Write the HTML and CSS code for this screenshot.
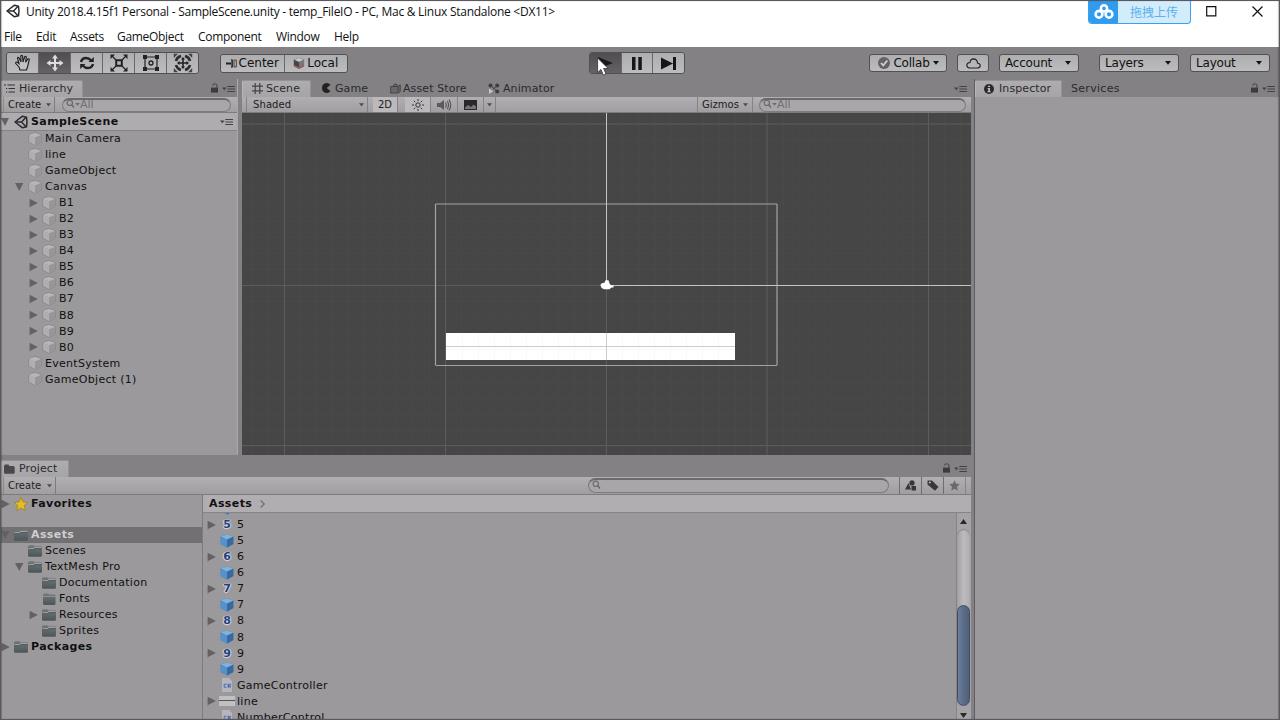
FILE: index.html
```
<!DOCTYPE html>
<html lang="en">
<head>
    <meta charset="UTF-8">
    <meta name="viewport" content="width=device-width, initial-scale=1.0">
    <title>Unity 2018.4.15f1 Personal - SampleScene.unity</title>
    <link rel="stylesheet" href="styles.css">
</head>
<body>
    <!-- shared icons -->
    <svg class="sprite">
        <defs>
            <linearGradient id="folderFill" x1="0" y1="0" x2="0" y2="1">
                <stop offset="0" stop-color="#71787a"/><stop offset="1" stop-color="#4c5558"/>
            </linearGradient>
        </defs>
        <symbol id="unity" viewBox="0 0 14 14">
            <path d="M1 7L8.5 1.2L12.5 2.2L13 7L12.5 11.8L8.5 12.8Z" fill="none" stroke="#2c2b2d" stroke-width="1.5" stroke-linejoin="round"/>
            <path d="M1 7H7.5L12 2.2M7.5 7L12 11.8" fill="none" stroke="#2c2b2d" stroke-width="1.4"/>
        </symbol>
        <symbol id="cube" viewBox="0 0 14 14">
            <path d="M7 .5L13.3 2.6V10L7 13.5L.7 10V2.6Z" fill="#a7a6a8" stroke="#858386" stroke-width=".7"/>
            <path d="M1.2 3L7 5.3V13L1.2 9.8Z" fill="#afaeb0"/>
            <path d="M7 5.3L12.8 3V9.8L7 13Z" fill="#989699"/>
            <path d="M7 .9L12.8 2.8L7 5.3L1.2 2.8Z" fill="#b7b6b8"/>
        </symbol>
        <symbol id="prefab" viewBox="0 0 14 14">
            <path d="M7 .5L13.3 2.6V10L7 13.5L.7 10V2.6Z" fill="#3f78b4"/>
            <path d="M.7 2.9L7 5.6V13.5L.7 10Z" fill="#5591cb"/>
            <path d="M7 5.6L13.3 2.9V10L7 13.5Z" fill="#38699f"/>
            <path d="M7 .5L13.3 2.6L7 5.6L.7 2.6Z" fill="#7fb2dc"/>
        </symbol>
        <symbol id="folder" viewBox="0 0 14 14">
            <path d="M0 12V2.8L1 1.2H5.5L6.5 2.2H13L14 3.2V12L13 12.8H1Z" fill="url(#folderFill)"/>
            <path d="M.6 4.7H5L7 3.4H13.4" stroke="#a3acae" stroke-width="1" fill="none"/>
            <path d="M.6 5.8H5.4L7.2 4.6H13.4" stroke="#485154" stroke-width=".7" fill="none"/>
        </symbol>
        <symbol id="folderEmpty" viewBox="0 0 14 14">
            <path d="M1 3.5L1.8 1.5H6L7 2.5H13L13.5 4V12L12.5 13H2L1 12Z" fill="url(#folderFill)"/>
            <path d="M1 4.4H13.4" stroke="#8e989b" stroke-width="1"/>
        </symbol>
        <symbol id="star" viewBox="0 0 14 14">
            <path d="M7 .4L9 4.9L13.8 5.4L10.2 8.6L11.3 13.6L7 11L2.7 13.6L3.8 8.6L.2 5.4L5 4.9Z" fill="#e5bd22" stroke="#a88317" stroke-width=".8"/>
        </symbol>
        <symbol id="script" viewBox="0 0 14 14">
            <path d="M2 0H9L12 3V14H2Z" fill="#b5b5bd"/>
            <path d="M6.6 6.2H4.2V9.2H6.6M7.4 6.7H11M7.4 8.7H11M8.4 5.8V9.6M10 5.8V9.6" fill="none" stroke="#4e6caf" stroke-width="1"/>
        </symbol>
        <symbol id="lock" viewBox="0 0 9 10">
            <path d="M1 4.6H8V9.6H1Z" fill="#3d3b3f"/>
            <path d="M2.8 2.7V2Q3 .8 4.7.8T7 2.5V5" fill="none" stroke="#4b494d" stroke-width="1.1"/>
        </symbol>
        <symbol id="paneMenu" viewBox="0 0 13 8">
            <path d="M0 2.5H4.6L2.3 5.3Z" fill="#444246"/>
            <path d="M5.3 1.5H13M5.3 4H13M5.3 6.5H13" stroke="#444246" stroke-width="1.1"/>
        </symbol>
        <symbol id="down" viewBox="0 0 6 4"><path d="M0 0H6L3 3.8Z" fill="currentColor"/></symbol>
        <symbol id="glass" viewBox="0 0 13 10">
            <circle cx="3.8" cy="3.8" r="2.7" fill="none" stroke="#6b696d" stroke-width="1.2"/>
            <path d="M5.8 5.8L8 8.4" stroke="#6b696d" stroke-width="1.5"/>
        </symbol>
    </svg>

    <div class="window">
        <header class="titlebar">
            <svg class="title-icon"><use href="#unity"/></svg>
            <span class="title">Unity 2018.4.15f1 Personal - SampleScene.unity - temp_FileIO - PC, Mac &amp; Linux Standalone &lt;DX11&gt;</span>
            <div class="upload">
                <span class="upload-logo">
                    <svg width="20" height="16" viewBox="0 0 20 16" fill="none" stroke="#fff" stroke-width="2.6">
                        <circle cx="10" cy="4.4" r="3.1"/><circle cx="5" cy="10.3" r="3.4"/><circle cx="15" cy="10.3" r="3.4"/>
                    </svg>
                </span>
                <span class="upload-text">拖拽上传</span>
            </div>
            <svg class="win-max" width="11" height="11" viewBox="0 0 11 11"><path d="M.7.7H9.8V9.8H.7Z" fill="none" stroke="#111" stroke-width="1.2"/></svg>
            <svg class="win-close" width="11" height="11" viewBox="0 0 11 11"><path d="M.5.5L10.5 10.5M10.5.5L.5 10.5" stroke="#111" stroke-width="1.2"/></svg>
        </header>

        <nav class="menubar">
            <span class="m-file">File</span><span class="m-edit">Edit</span><span class="m-assets">Assets</span><span class="m-object">GameObject</span><span class="m-component">Component</span><span class="m-window">Window</span><span>Help</span>
        </nav>

        <div class="toolbar">
            <div class="group tools">
                <button><svg width="18" height="18" viewBox="0 0 18 18"><path d="M6 16L5 13L1.8 9.5Q1.2 8 3 8L5 9.5L3.5 4.2Q3.8 2.8 5 3.8L7 8L6.8 2Q7.6.8 8.6 2L9 8L10.8 2.5Q12 1.8 12.3 3L11.6 8.3L14 4.8Q15.4 4.6 15.2 6L13.5 13L12.5 16Z" fill="#c1c0c2" stroke="#1c1b1d" stroke-width="1.1"/></svg></button>
                <button class="on"><svg width="18" height="18" viewBox="0 0 18 18"><path d="M9 .5L12 4.5H10V8H13.5V6L17.5 9L13.5 12V10H10V13.5H12L9 17.5L6 13.5H8V10H4.5V12L.5 9L4.5 6V8H8V4.5H6Z" fill="#dddcde"/></svg></button>
                <button><svg width="18" height="18" viewBox="0 0 18 18"><path d="M3 8Q4 4 8 4Q11 4 13 6.3M15 10Q14 14 10 14Q7 14 5 11.7" fill="none" stroke="#222" stroke-width="2.4"/><path d="M15.8 3V8H10.5ZM2.2 15V10H7.5Z" fill="#222"/></svg></button>
                <button><svg width="18" height="18" viewBox="0 0 18 18"><path d="M6.2 6.2H11.8V11.8H6.2Z" fill="none" stroke="#222" stroke-width="2"/><path d="M2 2L6 6M16 2L12 6M2 16L6 12M16 16L12 12" stroke="#222" stroke-width="1.2"/><path d="M.5.5H5L.5 5ZM17.5.5V5L13 .5ZM.5 17.5V13L5 17.5ZM17.5 17.5H13L17.5 13Z" fill="#222"/></svg></button>
                <button><svg width="18" height="18" viewBox="0 0 18 18"><path d="M3 3H15V15H3Z" fill="none" stroke="#222" stroke-width="1.2"/><path d="M1 1H5V5H1ZM13 1H17V5H13ZM1 13H5V17H1ZM13 13H17V17H13Z" fill="#222"/><circle cx="9" cy="9" r="2" fill="none" stroke="#222" stroke-width="1.3"/></svg></button>
                <button><svg width="20" height="20" viewBox="0 0 20 20"><path d="M3 8Q4 4 8 3M12 3Q16 4 17 8M17 12Q16 16 12 17M8 17Q4 16 3 12" fill="none" stroke="#2c2b2d" stroke-width="2.6"/><path d="M10 4L12 6.6H10.8V9.2H13.4V8L16 10L13.4 12V10.8H10.8V13.4H12L10 16L8 13.4H9.2V10.8H6.6V12L4 10L6.6 8V9.2H9.2V6.6H8Z" fill="#222"/><path d="M.8.8H5L.8 5ZM19.2.8V5L15 .8ZM.8 19.2V15L5 19.2ZM19.2 19.2H15L19.2 15Z" fill="#444"/></svg></button>
            </div>
            <div class="group pivot">
                <button><svg width="11" height="9" viewBox="0 0 11 9"><path d="M0 3.5H5V5.5H0Z" fill="#222"/><path d="M5 .8H6.5V8.2H5" fill="#555" stroke="#333"/><path d="M8 1H10.3V8H8Z" fill="none" stroke="#444"/></svg><span>Center</span></button>
                <button><svg width="12" height="12" viewBox="0 0 14 14"><path d="M7 .5L13 3V10L7 13.5L1 10V3Z" fill="#777"/><path d="M1 3.5L7 6V13L1 10Z" fill="#444"/><path d="M1 9L7 12L13 9V11L7 14L1 11Z" fill="#94595b"/><path d="M7 1L12 3.2L7 5.5L2 3.2Z" fill="#c7c7c7"/></svg><span>Local</span></button>
            </div>
            <div class="group play">
                <button class="on"><svg width="16" height="14" viewBox="0 0 16 14"><path d="M1 1L16 7L1 13Z" fill="#19181b"/></svg></button>
                <button><svg width="10" height="13" viewBox="0 0 10 13"><path d="M0 0H3.5V13H0ZM6.3 0H9.8V13H6.3Z" fill="#161517"/></svg></button>
                <button><svg width="16" height="13" viewBox="0 0 16 13"><path d="M0 .5L12 6.5L0 12.5ZM12 0H15V13H12Z" fill="#161517"/></svg></button>
            </div>
            <button class="drop collab"><svg class="check" width="12" height="12" viewBox="0 0 12 12"><circle cx="6" cy="6" r="6" fill="#646266"/><path d="M3 6L5.3 8.4L9.3 3.5" fill="none" stroke="#d0cfd1" stroke-width="1.8"/></svg><span>Collab</span><svg class="caret"><use href="#down"/></svg></button>
            <button class="drop cloud"><svg width="15" height="11" viewBox="0 0 15 11"><path d="M3.5 10H11.5Q14.3 9.8 14.2 7.5Q14 5.3 11.7 5.3Q11 .9 7.5.9Q4.4 1 4 4.5Q.8 4.7.8 7.3Q.9 9.8 3.5 10Z" fill="none" stroke="#222" stroke-width="1.1"/></svg></button>
            <button class="drop account"><span>Account</span><svg class="caret"><use href="#down"/></svg></button>
            <button class="drop layers"><span>Layers</span><svg class="caret"><use href="#down"/></svg></button>
            <button class="drop layout"><span>Layout</span><svg class="caret"><use href="#down"/></svg></button>
        </div>

        <main class="workspace">
            <div class="left-area">
                <div class="upper">
                    <section class="hierarchy">
                        <div class="tabs">
                            <div class="tab active t-hierarchy"><svg width="11" height="9" viewBox="0 0 11 9"><path d="M0 1H2M3.5 1H11M2 4.5H3.2M4.5 4.5H11M2 8H3.2M4.5 8H11" stroke="#333" stroke-width="1.2"/></svg><span>Hierarchy</span></div>
                            <svg class="lock"><use href="#lock"/></svg><svg class="pane-menu"><use href="#paneMenu"/></svg>
                        </div>
                        <div class="bar">
                            <span class="create">Create<svg class="caret"><use href="#down"/></svg></span>
                            <div class="search"><svg class="glass"><use href="#glass"/></svg><svg class="tiny"><use href="#down"/></svg><span>All</span></div>
                        </div>
                        <div class="row scene-row">
                            <svg class="arrow" viewBox="0 0 10 10"><path d="M1 1H9L5 9Z"/></svg><svg class="icon"><use href="#unity"/></svg><span>SampleScene</span><svg class="pane-menu"><use href="#paneMenu"/></svg>
                        </div>
                        <div id="hierarchyRows" class="hierarchy-rows"></div>
                    </section>

                    <section class="scene">
                        <div class="tabs">
                            <div class="tab active t-scene"><svg width="11" height="11" viewBox="0 0 11 11"><path d="M3.2 0V11M7.8 0V11M0 3.2H11M0 7.8H11" stroke="#444" stroke-width="1.2"/></svg><span>Scene</span></div>
                            <div class="tab t-game"><svg width="9" height="10" viewBox="0 0 9 10"><path d="M8.5 1.8Q7 0 4.8 0Q0 .5 0 5T4.8 10Q7 10 8.5 8.2L4.8 5Z" fill="#222"/></svg><span>Game</span></div>
                            <div class="tab t-store"><svg width="11" height="11" viewBox="0 0 11 11"><path d="M.7 3.5H8V10H.7ZM8 3.5L10.2 1.8V8.5L8 10M3 3.2Q4 0 7 1.4L7 3" fill="#6a686c" stroke="#444" stroke-width="1"/></svg><span>Asset Store</span></div>
                            <div class="tab t-animator"><svg width="12" height="11" viewBox="0 0 12 11"><path d="M2.5 2.5L9.5 8.5M9.5 2.5L5 6" stroke="#444"/><circle cx="2.5" cy="2.5" r="2" fill="#3f3d41"/><circle cx="9.2" cy="2.5" r="2" fill="#3f3d41"/><circle cx="9.2" cy="8.5" r="2" fill="#3f3d41"/><path d="M1 5.5L5 8.2L1 11Z" fill="#c9c8ca"/></svg><span>Animator</span></div>
                            <svg class="pane-menu"><use href="#paneMenu"/></svg>
                        </div>
                        <div class="bar">
                            <span class="cell shaded">Shaded<svg class="caret"><use href="#down"/></svg></span>
                            <span class="cell lit two-d">2D</span>
                            <span class="cell lit sun"><svg width="12" height="12" viewBox="0 0 12 12"><circle cx="6" cy="6" r="2.2" fill="none" stroke="#333"/><path d="M6 0V2M6 10V12M0 6H2M10 6H12M1.8 1.8L3.2 3.2M8.8 8.8L10.2 10.2M10.2 1.8L8.8 3.2M3.2 8.8L1.8 10.2" stroke="#333"/></svg></span>
                            <span class="cell sound"><svg width="15" height="12" viewBox="0 0 15 12"><path d="M0 4H3L7 1V11L3 8H0Z" fill="#5c5a5e"/><path d="M8.5 3.5Q10 6 8.5 8.5M10.3 2Q12.8 6 10.3 10M12 .6Q15.5 6 12 11.4" fill="none" stroke="#555357" stroke-width="1.1"/></svg></span>
                            <span class="cell picture"><svg width="13" height="10" viewBox="0 0 13 10"><path d="M0 0H13V10H0Z" fill="#29282b"/><path d="M1 9V7.5L4 5L7 7L9.5 4.5L12 6.5V9Z" fill="#77757a"/></svg></span>
                            <span class="cell pick"><svg class="caret"><use href="#down"/></svg></span>
                            <span class="cell gizmos">Gizmos<svg class="caret"><use href="#down"/></svg></span>
                            <div class="search"><svg class="glass"><use href="#glass"/></svg><svg class="tiny"><use href="#down"/></svg><span>All</span></div>
                        </div>
                        <svg class="viewport" width="729" height="342" viewBox="242 113 729 342">
                            <defs>
                                <pattern id="minorGrid" x="284" y="124" width="16.1" height="16.1" patternUnits="userSpaceOnUse"><path d="M.5 0V16.1M0 .5H16.1" stroke="#494949" fill="none"/></pattern>
                            </defs>
                            <rect x="242" y="113" width="729" height="342" fill="#464646"/>
                            <rect x="242" y="113" width="729" height="342" fill="url(#minorGrid)"/>
                            <path d="M284.5 113V455M445.5 113V455M606.5 285V455M767 113V455M928.5 113V455M242 124H971M242 285.5H606M242 445.5H971" stroke="#5c5c5c"/>
                            <rect x="446" y="333" width="289" height="27" fill="#fff"/>
                            <path d="M462.5 333V360M478.5 333V360M494.5 333V360M510.5 333V360M526.5 333V360M542.5 333V360M558.5 333V360M574.5 333V360M590.5 333V360M622.5 333V360M638.5 333V360M654.5 333V360M670.5 333V360M686.5 333V360M702.5 333V360M718.5 333V360M446 349.5H735" stroke="#f8f8fa"/>
                            <path d="M446 346.5H735M606.5 333V360" stroke="#cccccf"/>
                            <path d="M435.5 204H777M435.5 365.5H777M435.5 204V365M777 204V365" stroke="#a3a3a3" stroke-width="1.2"/>
                            <path d="M606.5 113V285M607 285.5H971" stroke="#c4c4c4"/>
                            <path d="M600.5 285.5Q600.5 282.8 604.5 282.8L605.5 280.3H608.5L609.5 283.5L611 285.3L613.5 285.5V287.5H611.5L609.5 289.3H604Q601 288.5 600.5 285.5Z" fill="#fff"/>
                        </svg>
                    </section>
                </div>

                <section class="project">
                    <div class="tabs">
                        <div class="tab active t-project"><svg width="11" height="10" viewBox="0 0 11 10"><path d="M0 9V2L1 .5H4.5L5.5 2H9.5L10.7 3V9L9.8 9.7H.8Z" fill="#4a484c"/></svg><span>Project</span></div>
                        <svg class="lock"><use href="#lock"/></svg><svg class="pane-menu"><use href="#paneMenu"/></svg>
                    </div>
                    <div class="bar">
                        <span class="create">Create<svg class="caret"><use href="#down"/></svg></span>
                        <div class="search"><svg class="glass"><use href="#glass"/></svg></div>
                        <span class="cell filter"><svg width="12" height="11" viewBox="0 0 12 11"><path d="M0 9.5L3.5 3L6 9.5ZM6.5 6H11V10.5H6.5Z" fill="#38363a"/><circle cx="7" cy="2.9" r="2.6" fill="#38363a"/></svg></span>
                        <span class="cell filter"><svg width="12" height="11" viewBox="0 0 12 11"><path d="M.5.5H5L11.5 7L8 10.7L.5 4.5Z" fill="#38363a"/><circle cx="2.8" cy="2.6" r="1" fill="#bbb"/></svg></span>
                        <span class="cell filter"><svg width="11" height="11" viewBox="0 0 14 14"><path d="M7 .3L9 4.9L13.8 5.2L10.2 8.6L11.2 13.6L7 11L2.8 13.6L3.8 8.6L.2 5.2L5 4.9Z" fill="#6b696d"/></svg></span>
                        <span class="cell"></span>
                    </div>
                    <div class="browser">
                        <div id="folderRows" class="folders"></div>
                        <div class="files">
                            <div class="crumb">Assets<svg width="5" height="8" viewBox="0 0 5 8"><path d="M.6.5L4.2 4L.6 7.5" fill="none" stroke="#737175" stroke-width="1.3"/></svg></div>
                            <div class="file-body">
                                <div id="fileRows" class="file-rows"></div>
                                <div class="scrollbar">
                                    <svg width="7" height="5" viewBox="0 0 7 5"><path d="M0 5L3.5 0L7 5Z" fill="#29282b"/></svg>
                                    <div class="track"><div class="thumb"></div></div>
                                    <svg width="7" height="5" viewBox="0 0 7 5"><path d="M0 0L3.5 5L7 0Z" fill="#29282b"/></svg>
                                </div>
                            </div>
                        </div>
                    </div>
                </section>
            </div>

            <section class="inspector">
                <div class="tabs">
                    <div class="tab active t-inspector"><svg width="10" height="10" viewBox="0 0 10 10"><circle cx="5" cy="5" r="5" fill="#2a292c"/><path d="M4 1.7H6V3.1H4ZM3.6 4H6V7.2H6.8V8.2H3.4V7.2H4.2V5H3.6Z" fill="#bbb"/></svg><span>Inspector</span></div>
                    <div class="tab t-services"><span>Services</span></div>
                    <svg class="lock"><use href="#lock"/></svg><svg class="pane-menu"><use href="#paneMenu"/></svg>
                </div>
                <div class="inspector-body"></div>
            </section>
        </main>

        <svg class="cursor" width="12" height="20" viewBox="0 0 12 20"><path d="M.6 1V15.5L4 12.4L6.3 18.2L9 17L6.6 11.5H11.2Z" fill="#fff" stroke="#333" stroke-width=".8"/></svg>
    </div>

    <script>
        // [level, arrow, icon, label, extra class]
        const hierarchy = [
            [1, '', 'cube', 'Main Camera'],
            [1, '', 'cube', 'line'],
            [1, '', 'cube', 'GameObject'],
            [1, 'open', 'cube', 'Canvas'],
            ...[1, 2, 3, 4, 5, 6, 7, 8, 9, 0].map(n => [2, 'closed', 'cube', 'B' + n]),
            [1, '', 'cube', 'EventSystem'],
            [1, '', 'cube', 'GameObject (1)']
        ];

        const folders = [
            [0, 'closed', 'star', 'Favorites', 'bold favorites'],
            [0, 'open', 'folder', 'Assets', 'bold selected'],
            [1, '', 'folder', 'Scenes'],
            [1, 'open', 'folder', 'TextMesh Pro'],
            [2, '', 'folder', 'Documentation'],
            [2, '', 'folderEmpty', 'Fonts'],
            [2, 'closed', 'folder', 'Resources'],
            [2, '', 'folder', 'Sprites'],
            [0, 'closed', 'folder', 'Packages', 'bold']
        ];

        const files = [[0, '', 'prefab', '']];
        for (let n = 5; n <= 9; n++) {
            files.push([0, 'closed', 'digit', String(n)]);
            files.push([0, '', 'prefab', String(n)]);
        }
        files.push([0, '', 'script', 'GameController']);
        files.push([0, 'closed', 'line', 'line']);
        files.push([0, '', 'script', 'NumberControl']);

        const arrows = {
            open: '<path d="M1 1H9.4L5.2 9Z"/>',
            closed: '<path d="M1.6 .8V9.2L9.8 5Z"/>',
            '': ''
        };

        function iconFor(icon, label) {
            if (icon === 'digit') return `<span class="icon digit"><b>${label}</b></span>`;
            if (icon === 'line') return '<span class="icon line-thumb"></span>';
            return `<svg class="icon"><use href="#${icon}"/></svg>`;
        }

        function fill(id, rows) {
            document.getElementById(id).innerHTML = rows.map(([level, arrow, icon, label, cls]) =>
                `<div class="row level-${level} ${cls || ''}">
                    <svg class="arrow" viewBox="0 0 10 10">${arrows[arrow]}</svg>${iconFor(icon, label)}<span>${label}</span>
                </div>`).join('');
        }

        fill('hierarchyRows', hierarchy);
        fill('folderRows', folders);
        fill('fileRows', files);
    </script>
</body>
</html>
```
FILE: styles.css
```
* {
    box-sizing: border-box;
}
body {
    margin: 0;
    font-family: "DejaVu Sans", Verdana, sans-serif;
    font-size: 11px;
    color: #111;
    overflow: hidden;
}
svg {
    flex: none;
    display: block;
}
.sprite {
    position: absolute;
    width: 0;
    height: 0;
}
.window {
    position: relative;
    width: 1280px;
    height: 720px;
    display: flex;
    flex-direction: column;
    background: #838184;
    overflow: hidden;
}
/* dark frame around the whole window */
.window::after {
    content: "";
    position: absolute;
    inset: 0;
    border: 1px solid #5a585c;
    box-shadow: inset 1px 0 1px rgba(0, 0, 0, 0.25), inset -1px 0 1px rgba(0, 0, 0, 0.25);
    pointer-events: none;
}

/* title and menu */
.titlebar {
    height: 24px;
    display: flex;
    align-items: center;
    background: #fff;
    padding: 0 0 2px 6px;
    font-family: "Open Sans", "Noto Sans", sans-serif;
    font-size: 12px;
}
.title-icon {
    width: 14px;
    height: 14px;
    margin-right: 6px;
}
.title {
    width: 1062px;
    letter-spacing: -0.265px;
    white-space: nowrap;
}
.upload {
    display: flex;
    align-self: flex-start;
    width: 103px;
    height: 24px;
    border: 1px solid #3ba0ee;
    border-top: none;
    border-radius: 0 0 4px 4px;
    background: #d3ecfc;
    overflow: hidden;
}
.upload-logo {
    width: 29px;
    background: #2f9cf2;
    display: flex;
    align-items: center;
    justify-content: center;
}
.upload-text {
    flex: 1;
    text-align: center;
    line-height: 23px;
    color: #59b0ee;
    font-family: "Noto Sans CJK SC", sans-serif;
}
.win-max {
    margin-left: 15px;
}
.win-close {
    margin-left: 35px;
}
.menubar {
    height: 23px;
    display: flex;
    align-items: center;
    padding: 2px 0 0 4px;
    background: #fff;
    font-family: "Open Sans", "Noto Sans", sans-serif;
    font-size: 12px;
    letter-spacing: -0.3px;
}
.m-file { width: 32px; }
.m-edit { width: 34px; }
.m-assets { width: 47px; }
.m-object { width: 81px; }
.m-component { width: 78px; }
.m-window { width: 58px; }

/* main toolbar */
.toolbar {
    height: 32px;
    display: flex;
    align-items: center;
    padding-left: 6px;
}
button {
    display: flex;
    align-items: center;
    justify-content: center;
    margin: 0;
    padding: 0;
    border: 1px solid #515053;
    border-radius: 3px;
    background: linear-gradient(#aeadaf, #bcbbbd);
    font: inherit;
    color: #111;
}
.group {
    display: flex;
    border: 1px solid #515053;
    border-radius: 3px;
    overflow: hidden;
}
.group button {
    flex: 1;
    border: none;
    border-radius: 0;
    border-left: 1px solid #69676b;
}
.group button:first-child {
    border-left: none;
}
.group .on {
    background: linear-gradient(#504e52, #646266);
}
.tools {
    width: 193px;
    height: 22px;
}
.pivot {
    width: 128px;
    height: 19px;
    margin-left: 21px;
    font-size: 12px;
    letter-spacing: -0.2px;
}
.pivot button {
    gap: 2px;
}
.play {
    width: 96px;
    height: 22px;
    margin-left: 241px;
}
.drop {
    height: 18px;
    justify-content: space-between;
    padding: 0 7px 0 5px;
    font-size: 12px;
    letter-spacing: -0.2px;
}
.caret {
    width: 6px;
    height: 4px;
}
.collab {
    width: 78px;
    margin-left: 184px;
    padding-left: 8px;
}
.cloud {
    width: 32px;
    margin-left: 10px;
    padding: 0;
    justify-content: center;
}
.account {
    width: 80px;
    margin-left: 10px;
}
.layers {
    width: 80px;
    margin-left: 20px;
}
.layout {
    width: 80px;
    margin-left: 11px;
}

/* docked panes */
.workspace {
    flex: 1;
    display: flex;
    gap: 4px;
    min-height: 0;
}
.left-area {
    width: 971px;
    display: flex;
    flex-direction: column;
}
.upper {
    display: flex;
    gap: 4px;
    height: 376px;
}
.hierarchy {
    width: 238px;
    background: #9b999c;
    border-right: 1px solid #aaa8ab;
}
.scene {
    width: 729px;
}
.inspector {
    flex: 1;
    display: flex;
    flex-direction: column;
    box-shadow: -1px 0 #5f5d61;
}
.inspector-body {
    flex: 1;
    background: #9b999c;
}
.tabs {
    height: 18px;
    display: flex;
    align-items: flex-end;
    background: #838184;
    padding-right: 4px;
}
.tab {
    height: 17px;
    display: flex;
    align-items: center;
    gap: 4px;
    padding-bottom: 1px;
    color: #2b2a2c;
    letter-spacing: 0.1px;
    white-space: nowrap;
}
.tab.active {
    background: linear-gradient(#aeacaf, #a6a4a7);
    border: 1px solid #949295;
    border-bottom: none;
    border-left-color: #b8b6b9;
    border-radius: 2px 2px 0 0;
}
.lock {
    width: 9px;
    height: 10px;
    margin: 0 3px 4px auto;
}
.pane-menu {
    width: 13px;
    height: 8px;
    margin-bottom: 4px;
}
.hierarchy .tabs {
    padding-right: 2px;
}
.inspector .tabs {
    padding-right: 5px;
}
.t-hierarchy {
    width: 83px;
    padding-left: 3px;
}
.t-scene {
    width: 69px;
    padding-left: 9px;
    margin-right: 11px;
    gap: 3px;
}
.t-game { width: 68px; }
.t-store { width: 98px; gap: 2px; }
.t-animator { width: 90px; gap: 3px; }
.scene .pane-menu {
    margin-left: auto;
}
.t-inspector {
    width: 87px;
    padding-left: 8px;
    gap: 5px;
}
.t-services {
    padding-left: 9px;
    letter-spacing: 0.3px;
}
.bar {
    height: 16px;
    display: flex;
    align-items: center;
    background: linear-gradient(#b1afb2, #a09ea1);
    border-bottom: 1px solid #7d7b7e;
    font-size: 10px;
    color: #1d1c1e;
}
.bar .caret {
    width: 5px;
    color: #4e4c50;
}
.create {
    height: 100%;
    width: 52px;
    margin-left: 3px;
    padding: 0 3px 0 4px;
    display: flex;
    align-items: center;
    justify-content: space-between;
    border-left: 1px solid #8c8a8d;
    border-right: 1px solid #7d7b7e;
}
.search {
    display: flex;
    align-items: center;
    flex: none;
    height: 14px;
    border: 1px solid #7d7b7e;
    border-top: 2px solid #6b696d;
    border-radius: 8px;
    background: #a8a6a9;
    color: #717073;
    font-size: 11px;
    padding: 0 0 2px 3px;
}
.search span {
    margin-left: -2px;
}
.hierarchy .search {
    width: 169px;
    margin-left: 7px;
}
.glass {
    width: 13px;
    height: 10px;
    margin-right: -4px;
}
.tiny {
    width: 5px;
    height: 3px;
    margin-right: 2px;
    color: #6b696d;
}
.cell {
    height: 100%;
    display: flex;
    align-items: center;
    justify-content: center;
    border-right: 1px solid #858386;
}
.cell.lit {
    background: #bbb9bc;
}
.shaded {
    width: 122px;
    margin-left: 4px;
    margin-right: 5px;
    padding: 0 3px 0 6px;
    border-left: 1px solid #858386;
    justify-content: space-between;
    letter-spacing: 0.1px;
}
.shaded,
.gizmos {
    flex: none;
}
.two-d {
    width: 25px;
    margin-right: 7px;
}
.sun { width: 26px; }
.sound { width: 27px; }
.picture { width: 26px; }
.pick { width: 12px; }
.gizmos {
    width: 56px;
    margin-left: 201px;
    padding: 0 4px;
    justify-content: space-between;
    border-left: 1px solid #858386;
}
.scene .search {
    width: 207px;
    margin-left: 6px;
}
.viewport {
    width: 729px;
    height: 342px;
}

/* tree rows */
.row {
    height: 16px;
    display: flex;
    align-items: center;
    letter-spacing: 0.28px;
    white-space: nowrap;
}
.row .arrow {
    width: 10px;
    height: 10px;
    margin-right: 4px;
    fill: #636165;
}
.row .icon {
    width: 14px;
    height: 14px;
    margin-right: 3px;
}
.level-1 { padding-left: 14px; }
.level-2 { padding-left: 28px; }
.bold,
.scene-row {
    font-weight: bold;
    letter-spacing: 0.4px;
}
.scene-row {
    height: 17.5px;
    padding-top: 0.5px;
    background: #aeacaf;
    border-bottom: 1px solid #858386;
}
.scene-row .pane-menu {
    margin: 0 4px 0 auto;
}
.hierarchy-rows .row {
    height: 16.06px;
}

/* project browser */
.project {
    flex: 1;
    display: flex;
    flex-direction: column;
    min-height: 0;
}
.project .tabs {
    height: 22px;
}
.t-project {
    width: 69px;
    padding-left: 3px;
}
.project .bar {
    height: 18px;
    flex: none;
}
.project .create {
    width: 53px;
}
.project .search {
    width: 301px;
    height: 15px;
    margin-left: 532px;
    margin-right: 10px;
}
.filter {
    width: 22px;
    border-right: none;
    border-left: 1px solid #6f6d70;
}
.project .cell:last-child {
    width: 1px;
}
.browser {
    flex: 1;
    display: flex;
    min-height: 0;
}
.folders {
    width: 203px;
    padding-top: 0.5px;
    background: #9b999c;
    border-right: 1px solid #7d7b7e;
}
.favorites {
    margin-bottom: 15px;
}
.selected {
    background: #727073;
    color: #cfced0;
}
.files {
    flex: 1;
    display: flex;
    flex-direction: column;
    min-width: 0;
}
.crumb {
    height: 18px;
    display: flex;
    align-items: center;
    gap: 8px;
    padding-left: 6px;
    font-weight: bold;
    letter-spacing: 0.4px;
    background: #b0aeb1;
    border-bottom: 1px solid #868487;
}
.file-body {
    flex: 1;
    display: flex;
    min-height: 0;
    background: #9b999c;
}
.file-rows {
    flex: 1;
    overflow: hidden;
    padding-left: 3px;
}
.file-rows .row {
    height: 16.08px;
}
.file-rows .row:first-child {
    margin-top: -12.6px;
}
.digit {
    display: flex;
    align-items: center;
    justify-content: center;
}
.digit b {
    width: 9px;
    height: 11px;
    color: #24427c;
    font-size: 11px;
    letter-spacing: 0;
    line-height: 11px;
    text-align: center;
    text-shadow: 0 0 1px #d6dae6, 1px 0 1px #d6dae6, -1px 0 1px #d6dae6, 0 1px 1px #d6dae6;
}
.row .line-thumb {
    width: 16px;
    height: 10px;
    margin: 0 2px 0 -1px;
    background: linear-gradient(#c0bfc1 4px, #555 4px, #555 5px, #c0bfc1 5px);
}
.scrollbar {
    width: 15px;
    display: flex;
    flex-direction: column;
    align-items: center;
    padding: 6px 1px 2px 0;
    background: #a5a3a6;
    border-left: 1px solid #858386;
}
.track {
    flex: 1;
    width: 13px;
    margin: 5px 0 7px;
    display: flex;
    align-items: flex-end;
    border-radius: 7px;
    background: linear-gradient(90deg, #a19fa2, #bdbbbe 50%, #b0aeb1);
    box-shadow: inset 0 1px 1px #858386;
}
.thumb {
    width: 13px;
    height: 101px;
    border: 1px solid #414b65;
    border-radius: 7px;
    background: linear-gradient(90deg, #6b7d98, #596b86 55%, #50617c);
}

.cursor {
    position: absolute;
    left: 597px;
    top: 57px;
}
```
